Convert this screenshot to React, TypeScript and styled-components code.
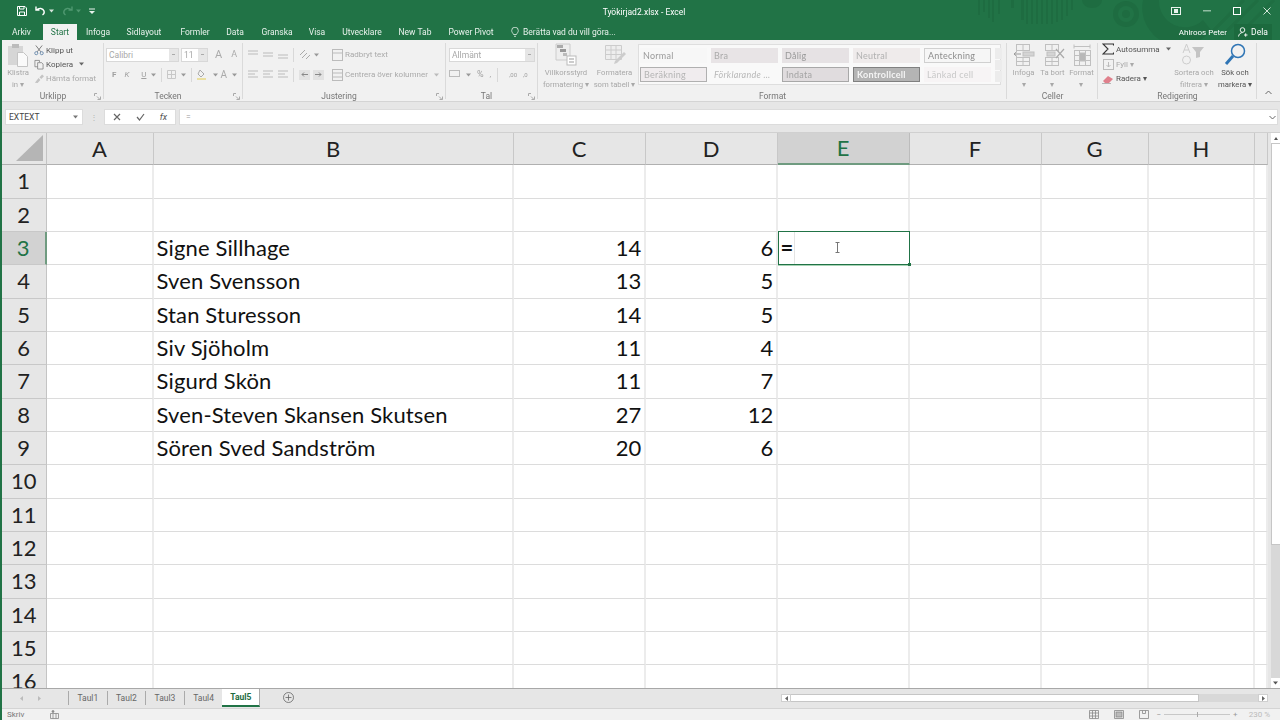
import React from "react"
import styled, { createGlobalStyle } from "styled-components"

const UI_FONT = `Roboto, "Open Sans", sans-serif`
const SHEET_FONT = `Lato, "Open Sans", sans-serif`

const GlobalStyle = createGlobalStyle`
    html, body { margin: 0; padding: 0; overflow: hidden; background: #f1f1f1; }
    * { box-sizing: border-box; }
`

const Window = styled.div`
    width: 1280px;
    height: 720px;
    display: flex;
    flex-direction: column;
    overflow: hidden;
    border-left: 2px solid #217346;
    font-family: ${UI_FONT};
    position: relative;
    filter: blur(0.3px);
`

const TitleBar = styled.div`
    height: 40px;
    margin-left: -2px;
    background: #217346;
    color: #fff;
    position: relative;
    display: flex;
    flex-direction: column;
    flex: none;
`

const Watermark = styled.svg`
    position: absolute;
    right: 0;
    top: 0;
`

const TitleRow = styled.div`
    height: 24px;
    display: grid;
    grid-template-columns: 1fr auto 1fr;
    align-items: center;
    padding: 0 9px 2px 17px;
    position: relative;
`

const QuickAccess = styled.div`
    display: flex;
    align-items: center;
    gap: 8px;
`

const QuickGroup = styled.div`
    display: flex;
    align-items: center;
    gap: 3px;
`

const TitleText = styled.div`
    font-size: 8.5px;
    padding-top: 2px;
`

const WindowControls = styled.div`
    display: flex;
    justify-content: flex-end;
    align-items: center;
    gap: 22px;
`

const TabRow = styled.div`
    height: 16px;
    display: flex;
    align-items: stretch;
    position: relative;
`

const MenuTab = styled.div<{ $w: number; $active?: boolean }>`
    width: ${({ $w }) => $w}px;
    font-size: 8.5px;
    display: flex;
    align-items: center;
    justify-content: center;
    color: ${({ $active }) => ($active ? "#217346" : "#e8f2ec")};
    background: ${({ $active }) => ($active ? "#f1f1f1" : "transparent")};
`

const TellMe = styled.div`
    margin-left: 4px;
    font-size: 8.5px;
    color: #e8f2ec;
    display: flex;
    align-items: center;
    gap: 4px;
`

const UserArea = styled.div`
    margin-left: auto;
    display: flex;
    align-items: center;
    padding-right: 8px;
    font-size: 8px;
`

const ShareButton = styled.div`
    width: 38px;
    height: 16px;
    margin-left: 7px;
    background: #1c6a3e;
    font-size: 8.5px;
    display: flex;
    align-items: center;
    justify-content: center;
    gap: 3px;
`

const Ribbon = styled.div`
    height: 62px;
    flex: none;
    display: flex;
    background: #f1f1f1;
    border-bottom: 1px solid #d4d4d4;
    position: relative;
`

const Group = styled.div<{ $w: number }>`
    width: ${({ $w }) => $w}px;
    flex: none;
    display: flex;
    flex-direction: column;
    position: relative;
    &::after {
        content: "";
        position: absolute;
        right: 0;
        top: 3px;
        bottom: 2px;
        width: 1px;
        background: #dadada;
    }
`

const GroupBody = styled.div<{ $pad?: string; $gap?: number }>`
    height: 46px;
    flex: none;
    display: flex;
    gap: ${({ $gap }) => $gap ?? 4}px;
    padding: ${({ $pad }) => $pad ?? "3px 4px 0"};
`

const GroupLabel = styled.div<{ $shift?: boolean }>`
    height: 15px;
    flex: none;
    font-size: 8.5px;
    color: #777;
    display: flex;
    align-items: center;
    justify-content: center;
    position: relative;
    padding-top: 4px;
    padding-right: ${({ $shift }) => ($shift ? "11px" : "0")};
`

const Launcher = styled.svg`
    position: absolute;
    right: 3px;
    top: 7px;
`

const BigButton = styled.div<{ $w: number; $dark?: boolean }>`
    width: ${({ $w }) => $w}px;
    flex: none;
    display: flex;
    flex-direction: column;
    align-items: center;
    font-size: 7.7px;
    line-height: 11.5px;
    text-align: center;
    white-space: nowrap;
    color: ${({ $dark }) => ($dark ? "#555" : "#a8a8a8")};
    & > svg {
        flex: none;
        margin-bottom: 0;
    }
`

const SmallColumn = styled.div<{ $w?: number }>`
    width: ${({ $w }) => ($w ? `${$w}px` : "auto")};
    flex: none;
    display: flex;
    flex-direction: column;
`

const SmallAction = styled.div<{ $muted?: boolean }>`
    height: 15px;
    display: flex;
    align-items: center;
    gap: 2px;
    font-size: 8px;
    white-space: nowrap;
    color: ${({ $muted }) => ($muted ? "#aaa" : "#555")};
`

const Stack = styled.div<{ $gap?: number }>`
    display: flex;
    flex-direction: column;
    gap: ${({ $gap }) => $gap ?? 5}px;
`

const Line = styled.div<{ $gap?: number }>`
    display: flex;
    align-items: center;
    gap: ${({ $gap }) => $gap ?? 5}px;
    height: 15px;
`

const Combo = styled.div<{ $w: number }>`
    width: ${({ $w }) => $w}px;
    height: 14px;
    background: #fff;
    border: 1px solid #d8d8d8;
    font-size: 8.5px;
    color: #a8a8a8;
    display: flex;
    align-items: center;
    padding-left: 2px;
    position: relative;
    &::after {
        content: "";
        position: absolute;
        right: 0;
        top: 0;
        bottom: 0;
        width: 9px;
        background: #e6e6e6 linear-gradient(#aaa, #aaa) center / 3px 1px no-repeat;
    }
`

const Glyph = styled.span<{ $size?: number; $italic?: boolean; $under?: boolean; $bold?: boolean; $color?: string; $gapLeft?: number }>`
    font-size: ${({ $size }) => $size ?? 8}px;
    font-style: ${({ $italic }) => ($italic ? "italic" : "normal")};
    font-weight: ${({ $bold }) => ($bold ? 700 : 400)};
    text-decoration: ${({ $under }) => ($under ? "underline" : "none")};
    color: ${({ $color }) => $color ?? "#a0a0a0"};
    margin-left: ${({ $gapLeft }) => $gapLeft ?? 0}px;
    line-height: 1;
`

const VSep = styled.div`
    width: 1px;
    height: 14px;
    background: #d8d8d8;
`

const OrientSlot = styled.div`
    width: 28px;
    display: flex;
    align-items: center;
    gap: 3px;
`

const IndentBox = styled.div`
    width: 11px;
    height: 10px;
    background: #e2e2e2;
    display: flex;
    align-items: center;
    justify-content: center;
`

const Gallery = styled.div`
    margin-top: 1px;
    width: 363px;
    height: 41px;
    background: #f9f9f9;
    border: 1px solid #dedede;
    display: grid;
    grid-template-columns: repeat(5, 67px) 7px;
    grid-template-rows: 15px 15px;
    column-gap: 4px;
    row-gap: 4px;
    padding: 3px 1px;
    position: relative;
`

const StyleCell = styled.div<{ $bg: string; $color: string; $border?: string; $italic?: boolean; $bold?: boolean }>`
    background: ${({ $bg }) => $bg};
    color: ${({ $color }) => $color};
    border: ${({ $border }) => ($border ? `1px solid ${$border}` : "none")};
    font-family: ${SHEET_FONT};
    font-size: 9px;
    font-style: ${({ $italic }) => ($italic ? "italic" : "normal")};
    font-weight: ${({ $bold }) => ($bold ? 700 : 400)};
    letter-spacing: 0.25px;
    display: flex;
    align-items: center;
    padding: 0 0 1px 3px;
    white-space: nowrap;
    overflow: hidden;
`

const GalleryScroll = styled.div`
    grid-column: 6;
    grid-row: 1 / span 2;
    display: grid;
    grid-template-rows: 1fr 1fr 1fr;
    gap: 1px;
    & > div { background: #ececec; }
`

const CollapseArrow = styled.svg`
    position: absolute;
    right: 8px;
    bottom: 6px;
`

const FormulaBar = styled.div`
    height: 31px;
    flex: none;
    background: #e6e6e6;
    display: flex;
    align-items: center;
    padding: 0 2px 0 3px;
    border-bottom: 1px solid #d0d0d0;
`

const NameBox = styled.div`
    width: 78px;
    height: 16px;
    background: #fff;
    border: 1px solid #dcdcdc;
    font-size: 8.5px;
    color: #444;
    display: flex;
    align-items: center;
    justify-content: space-between;
    padding: 0 4px 0 3px;
`

const GripDots = styled.div`
    width: 21px;
    text-align: center;
    color: #b5b5b5;
    font-size: 8px;
`

const FxBox = styled.div`
    width: 72px;
    height: 16px;
    background: #fff;
    border: 1px solid #dcdcdc;
    display: flex;
    align-items: center;
    justify-content: space-between;
    padding: 0 8px;
`

const FormulaInput = styled.div`
    flex: 1;
    height: 16px;
    margin-left: 3px;
    background: #fff;
    border: 1px solid #dcdcdc;
    font-size: 8.5px;
    color: #999;
    display: flex;
    align-items: center;
    padding: 0 1px 0 6px;
    justify-content: space-between;
`

const SheetArea = styled.div`
    height: 556px;
    flex: none;
    display: flex;
    background: #fff;
`

const Grid = styled.div`
    flex: 1;
    overflow: hidden;
    display: grid;
    grid-template-columns: 44.5px 107px 360px 132px 132px 132px 132px 107px 106px 13.5px;
    grid-template-rows: 32.3px repeat(16, 33.33px);
    font-family: ${SHEET_FONT};
    font-size: 22px;
    line-height: 1;
    color: #111;
    position: relative;
    border-bottom: 1px solid #a8a8a8;
    height: 556px;
`

const Corner = styled.div`
    background: #e6e6e6;
    border-right: 1px solid #c4c4c4;
    border-bottom: 1px solid #b0b0b0;
    position: relative;
    &::after {
        content: "";
        position: absolute;
        right: 3px;
        bottom: 3px;
        border-style: solid;
        border-width: 0 0 26px 27px;
        border-color: transparent transparent #b5b5b5 transparent;
    }
`

const ColHead = styled.div<{ $active?: boolean }>`
    background: ${({ $active }) => ($active ? "#d2d2d2" : "#e6e6e6")};
    color: ${({ $active }) => ($active ? "#217346" : "#222")};
    border-right: 1px solid ${({ $active }) => ($active ? "#bcbcbc" : "#c8c8c8")};
    border-bottom: ${({ $active }) => ($active ? "2px solid #6f9b80" : "1px solid #b0b0b0")};
    display: flex;
    align-items: center;
    justify-content: center;
`

const RowHead = styled.div<{ $active?: boolean }>`
    background: ${({ $active }) => ($active ? "#d2d2d2" : "#e6e6e6")};
    color: ${({ $active }) => ($active ? "#217346" : "#222")};
    border-right: ${({ $active }) => ($active ? "2px solid #6f9b80" : "1px solid #c4c4c4")};
    border-bottom: 1px solid #c8c8c8;
    display: flex;
    align-items: center;
    justify-content: center;
`

const Cell = styled.div<{ $num?: boolean }>`
    border-right: 2px solid #ececec;
    border-bottom: 1px solid #dcdcdc;
    display: flex;
    align-items: center;
    justify-content: ${({ $num }) => ($num ? "flex-end" : "flex-start")};
    padding: 0 ${({ $num }) => ($num ? "2px" : "0")} 0 ${({ $num }) => ($num ? "0" : "3px")};
    white-space: nowrap;
    letter-spacing: 0.14px;
`

const SelectedCell = styled.div`
    border: 1px solid #217346;
    box-shadow: 0 1px 0 #a7d3b5;
    display: flex;
    align-items: stretch;
    position: relative;
    margin-top: -1px;
    &::after {
        content: "";
        position: absolute;
        right: -2px;
        bottom: -2px;
        width: 3px;
        height: 3px;
        background: #217346;
    }
`

const EditText = styled.div`
    width: 16px;
    padding-left: 2px;
    font-weight: 700;
    display: flex;
    align-items: center;
    border-right: 1px solid #e4e4e4;
`

const EditCursor = styled.svg`
    position: absolute;
    left: 56px;
    top: 10px;
`

const VScroll = styled.div`
    width: 12px;
    flex: none;
    background: #e6e6e6;
    padding-left: 3px;
    display: flex;
    flex-direction: column;
    height: 556px;
    border-bottom: 1px solid #a8a8a8;
`

const ScrollThumb = styled.div`
    height: 402px;
    flex: none;
    background: #fff;
    border: 1px solid #c6c6c6;
    border-right: none;
`

const ScrollRest = styled.div`
    flex: 1;
    background: #d8d8d8;
`

const ScrollButton = styled.div`
    height: 10px;
    flex: none;
    background: #fff;
    display: flex;
    align-items: center;
    justify-content: center;
`

const UpCaret = styled.div`
    width: 0;
    height: 0;
    border-style: solid;
    border-width: 0 2.5px 3px 2.5px;
    border-color: transparent transparent #555 transparent;
`

const TabStrip = styled.div`
    height: 19px;
    flex: none;
    background: #e6e6e6;
    display: flex;
    align-items: stretch;
    font-size: 8.5px;
`

const TabNav = styled.div`
    width: 66px;
    display: flex;
    align-items: center;
    gap: 15px;
    padding-left: 18px;
    color: #bbb;
    flex: none;
`

const SheetTab = styled.div<{ $active?: boolean }>`
    width: ${({ $active }) => ($active ? 38 : 38.6)}px;
    margin: ${({ $active }) => ($active ? "0 0 1px" : "2px 0 3px")};
    display: flex;
    align-items: center;
    justify-content: center;
    color: ${({ $active }) => ($active ? "#1e6b40" : "#666")};
    font-weight: ${({ $active }) => ($active ? 700 : 400)};
    background: ${({ $active }) => ($active ? "#fff" : "transparent")};
    border-left: ${({ $active }) => ($active ? "none" : "1px solid #aaa")};
    border-bottom: ${({ $active }) => ($active ? "2px solid #217346" : "none")};
    border-right: ${({ $active }) => ($active ? "1px solid #aaa" : "none")};
`

const AddSheet = styled.svg`
    margin: 3px 0 0 23px;
    flex: none;
`

const HScrollTrack = styled.div`
    width: 487px;
    margin: 5px 12px 6px auto;
    display: flex;
    background: #d8d8d8;
    align-items: stretch;
`

const ArrowBox = styled.div`
    width: 10px;
    background: #fff;
    border: 1px solid #cfcfcf;
    display: flex;
    align-items: center;
    justify-content: center;
`

const HThumb = styled.div`
    width: 408px;
    background: #fff;
    border: 1px solid #c6c6c6;
    border-left: none;
`

const HRest = styled.div`
    flex: 1;
`

const StatusBar = styled.div`
    height: 12px;
    flex: none;
    background: #f1f1f1;
    border-top: 1px solid #d4d4d4;
    display: flex;
    align-items: center;
    font-size: 8px;
    color: #777;
    padding-left: 5px;
`

const MacroIcon = styled.svg`
    margin-left: 26px;
`

const StatusRight = styled.div`
    margin-left: auto;
    display: flex;
    align-items: center;
    gap: 15px;
    padding-right: 10px;
`

const ZoomSlider = styled.div`
    width: 66px;
    height: 1px;
    background: #c8c8c8;
    position: relative;
    &::after {
        content: "";
        position: absolute;
        left: 33px;
        top: -2px;
        width: 1px;
        height: 5px;
        background: #aaa;
    }
`

const ZoomGroup = styled.div`
    display: flex;
    align-items: center;
    gap: 3px;
    margin-left: -7px;
    color: #999;
`

const ZoomValue = styled.span`
    margin-left: 8px;
    color: #bbb;
`

const Caret = ({ color = "#999" }: { color?: string }) => (
    <svg width="5" height="4" viewBox="0 0 5 4"><path d="M0 .5h5L2.5 3.5z" fill={color} /></svg>
)

const LauncherIcon = () => (
    <Launcher width="7" height="7" viewBox="0 0 7 7">
        <path d="M.5 3V.5H3M6 6.5L3 3.5M6.5 3.5v3h-3" stroke="#aaa" strokeWidth="1" fill="none" />
    </Launcher>
)

const CellIcon = ({ kind }: { kind: "insert" | "delete" | "format" }) => (
    <svg width="24" height="24" viewBox="0 0 24 24" fill="none" stroke="#c0c0c0" strokeWidth="1">
        {kind === "format" ? (
            <>
                <path d="M4 3.5h16M4 1.5v4M20 1.5v4" />
                <rect x="4.5" y="7.5" width="16" height="15" />
                <path d="M4.5 12.5h16M4.5 17.5h16M9.5 7.5v15M15.5 7.5v15" />
                <rect x="9.5" y="10" width="6" height="8" fill="#b8b8b8" />
            </>
        ) : (
            <>
                <rect x="4.5" y="1.5" width="13" height="6" />
                <path d="M11 1.5v6" />
                <rect x="4.5" y="14.5" width="13" height="8" />
                <path d="M4.5 18.5h13M11 14.5v8" />
                {kind === "insert" ? (
                    <>
                        <rect x="11" y="9" width="11" height="4" fill="#d4d4d4" />
                        <path d="M9 11H2M5 8.5L2 11l3 2.5" stroke="#999" />
                    </>
                ) : (
                    <>
                        <rect x="6" y="9" width="8" height="4" fill="#d4d4d4" />
                        <path d="M15 6l8 9M23 6l-8 9" stroke="#aaa" strokeWidth="1.2" />
                    </>
                )}
            </>
        )}
    </svg>
)

const COL_LABELS = ["A", "B", "C", "D", "E", "F", "G", "H", ""]
const ROWS: Record<number, [string, number, number]> = {
    3: ["Signe Sillhage", 14, 6],
    4: ["Sven Svensson", 13, 5],
    5: ["Stan Sturesson", 14, 5],
    6: ["Siv Sjöholm", 11, 4],
    7: ["Sigurd Skön", 11, 7],
    8: ["Sven-Steven Skansen Skutsen", 27, 12],
    9: ["Sören Sved Sandström", 20, 6],
}
const ROW_NUMBERS = Array.from({ length: 16 }, (_, i) => i + 1)

const MENU: [string, number, boolean?][] = [
    ["Arkiv", 43],
    ["Start", 34, true],
    ["Infoga", 42],
    ["Sidlayout", 50],
    ["Formler", 52],
    ["Data", 28],
    ["Granska", 56],
    ["Visa", 24],
    ["Utvecklare", 66],
    ["New Tab", 40],
    ["Power Pivot", 72],
]

const App: React.FC = () => (
    <Window>
        <GlobalStyle />
        <TitleBar>
            <Watermark width="310" height="40" viewBox="970 0 310 40">
                <g fill="#1e6c41">
                    <rect x="978" y="0" width="2" height="15" />
                    <rect x="983" y="0" width="2" height="12" />
                    <rect x="988" y="0" width="2" height="18" />
                    <rect x="992" y="0" width="2" height="22" />
                    <rect x="998" y="0" width="2" height="14" />
                    <rect x="1011" y="0" width="3" height="8" />
                    <rect x="1021" y="0" width="3" height="20" />
                    <rect x="1026" y="0" width="2" height="24" />
                    <rect x="1031" y="0" width="2" height="24" />
                    <rect x="1036" y="0" width="2" height="24" />
                    <rect x="1041" y="0" width="2" height="24" />
                    <rect x="1046" y="0" width="2" height="24" />
                    <rect x="1051" y="0" width="2" height="24" />
                    <rect x="1056" y="0" width="2" height="22" />
                    <rect x="1061" y="0" width="2" height="20" />
                    <rect x="1066" y="0" width="2" height="16" />
                    <rect x="1071" y="0" width="2" height="10" />
                    <path d="M1082 0h20a10 8 0 0 1-20 0z" />
                </g>
                <circle cx="1126" cy="14" r="13" fill="#1e6c41" />
                <circle cx="1126" cy="14" r="8" fill="#217346" />
                <circle cx="1126" cy="14" r="4" fill="#1e6c41" />
                <path d="M1143 0a38 38 0 0 0 68 30l-8-10a26 26 0 0 1-44-20z" fill="#1e6c41" />
                <path d="M1212 32l32-32M1222 36l36-36M1236 38l38-38" stroke="#1f6e42" strokeWidth="3" />
            </Watermark>
            <TitleRow>
                <QuickAccess>
                    <svg width="10" height="10" viewBox="0 0 10 10" fill="none" stroke="#fff" strokeWidth="1">
                        <path d="M.5.5H8L9.500 2v7.500H.5z" />
                        <path d="M2.500.5V3H7V.5M2.500 9.500V6h5v3.500" />
                    </svg>
                    <QuickGroup>
                        <svg width="11" height="10" viewBox="0 0 11 10" fill="none" stroke="#fff" strokeWidth="1.4">
                            <path d="M1 .5V4h3.500M1.500 4C4 1.500 8 2 9 5c.5 1.500 0 3-1.500 4" />
                        </svg>
                        <Caret color="#d7e6dd" />
                    </QuickGroup>
                    <QuickGroup>
                        <svg width="11" height="10" viewBox="0 0 11 10" fill="none" stroke="#4f9870" strokeWidth="1.4">
                            <path d="M10 .5V4H6.500M9.500 4C7 1.500 3 2 2 5c-.5 1.500 0 3 1.500 4" />
                        </svg>
                        <Caret color="#4f9870" />
                    </QuickGroup>
                    <svg width="6" height="6" viewBox="0 0 6 6"><path d="M0 3h6L3 6z" fill="#e8f2ec" /><path d="M0 1h6" stroke="#e8f2ec" /></svg>
                </QuickAccess>
                <TitleText>Työkirjad2.xlsx - Excel</TitleText>
                <WindowControls>
                    <svg width="10" height="8" viewBox="0 0 10 8"><rect x=".5" y=".5" width="9" height="7" fill="none" stroke="#e8f2ec" /><rect x="3" y="2" width="4" height="4" fill="#e8f2ec" /></svg>
                    <svg width="8" height="2" viewBox="0 0 8 2"><rect width="8" height="1.5" fill="#8fbca2" /></svg>
                    <svg width="8" height="8" viewBox="0 0 8 8"><rect x=".5" y=".5" width="7" height="7" fill="none" stroke="#fff" /></svg>
                    <svg width="8" height="8" viewBox="0 0 8 8"><path d="M.5.5l7 7M7.5.5l-7 7" stroke="#cfe3d6" /></svg>
                </WindowControls>
            </TitleRow>
            <TabRow>
                {MENU.map(([label, w, active]) => (
                    <MenuTab key={label} $w={w} $active={active}>{label}</MenuTab>
                ))}
                <TellMe>
                    <svg width="8" height="10" viewBox="0 0 8 10" fill="none" stroke="#e8f2ec" strokeWidth=".8">
                        <path d="M2.5 7.5C2 6 .7 5.5.7 3.5a3.3 3.3 0 0 1 6.600 0C7.300 5.500 6 6 5.500 7.500zM3 9.300h2" />
                    </svg>
                    Berätta vad du vill göra...
                </TellMe>
                <UserArea>
                    Ahlroos Peter
                    <ShareButton>
                        <svg width="10" height="10" viewBox="0 0 10 10" fill="none" stroke="#fff" strokeWidth=".9">
                            <circle cx="4.5" cy="3" r="2.3" />
                            <path d="M.5 9.5C1 7 2.500 5.600 4.500 5.600M6 8h3.500M7.700 6.300v3.400" />
                        </svg>
                        Dela
                    </ShareButton>
                </UserArea>
            </TabRow>
        </TitleBar>

        <Ribbon>
            <Group $w={102}>
                <GroupBody $pad="3px 2px 0 3px" $gap={3}>
                    <BigButton $w={26}>
                        <svg width="22" height="24" viewBox="0 0 22 24">
                            <rect x="1" y="3" width="15" height="19" fill="#d6d6d6" />
                            <rect x="5" y="1" width="7" height="4" fill="#bcbcbc" />
                            <path d="M10.5 9.5h6l4 4v10h-10z" fill="#fafafa" stroke="#c4c4c4" />
                        </svg>
                        Klistra
                        <br />
                        in ▾
                    </BigButton>
                    <SmallColumn>
                        <SmallAction>
                            <svg width="10" height="12" viewBox="0 0 11 12" fill="none" stroke="#666" strokeWidth=".9">
                                <path d="M2 1l5.5 7M9 1L3.5 8" />
                                <circle cx="2.5" cy="9.5" r="1.7" stroke="#5b7fa6" />
                                <circle cx="8.5" cy="9.500" r="1.700" stroke="#5b7fa6" />
                            </svg>
                            Klipp ut
                        </SmallAction>
                        <SmallAction>
                            <svg width="10" height="11" viewBox="0 0 11 11" fill="none" stroke="#777" strokeWidth=".8">
                                <path d="M1 1h5v2M1 1v7h3" />
                                <path d="M4 3.5h4.5L10 5v5.5H4z" />
                            </svg>
                            Kopiera&nbsp;&nbsp;<Caret color="#666" />
                        </SmallAction>
                        <SmallAction $muted>
                            <svg width="10" height="10" viewBox="0 0 11 10">
                                <path d="M1 9l4-5 2 2-3 3.5zM6 3l3-3 2 2-3 3z" fill="#c4c4c4" />
                            </svg>
                            Hämta format
                        </SmallAction>
                    </SmallColumn>
                </GroupBody>
                <GroupLabel>Urklipp<LauncherIcon /></GroupLabel>
            </Group>

            <Group $w={139}>
                <GroupBody $pad="7px 2px 0 2px">
                    <Stack $gap={5}>
                        <Line $gap={2}>
                            <Combo $w={73}>Calibri</Combo>
                            <Combo $w={27}>11</Combo>
                            <Glyph $size={11} $color="#aaa" $gapLeft={5}>A</Glyph>
                            <Glyph $size={9} $color="#aaa" $gapLeft={7}>A</Glyph>
                        </Line>
                        <Line $gap={5}>
                            <Glyph $bold $gapLeft={6}>F</Glyph>
                            <Glyph $italic $gapLeft={3}>K</Glyph>
                            <Glyph $under $gapLeft={7}>U</Glyph>
                            <Caret />
                            <VSep />
                            <svg width="9" height="9" viewBox="0 0 9 9"><path d="M.5.5h8v8h-8zM.5 4.5h8M4.5.5v8" fill="none" stroke="#c8c8c8" /></svg>
                            <Caret />
                            <VSep />
                            <svg width="11" height="11" viewBox="0 0 11 11"><path d="M3 1l4 4-3 3-3-3z" fill="none" stroke="#aaa" /><rect y="9" width="9" height="2" fill="#eadfa0" /></svg>
                            <Caret />
                            <Glyph $size={10} $color="#aaa" $gapLeft={-3}>A</Glyph>
                            <Caret />
                        </Line>
                    </Stack>
                </GroupBody>
                <GroupLabel $shift>Tecken<LauncherIcon /></GroupLabel>
            </Group>

            <Group $w={203}>
                <GroupBody $pad="7px 2px 0 5px">
                    <Stack $gap={5}>
                        <Line $gap={5}>
                            {[0, 1, 2].map((i) => (
                                <svg key={i} width="10" height="9" viewBox="0 0 10 9" stroke="#bbb"><path d={`M0 ${1 + i * 2}h10M0 ${4 + i * 2}h10`} /></svg>
                            ))}
                            <VSep />
                            <OrientSlot>
                                <svg width="12" height="11" viewBox="0 0 12 11" fill="none" stroke="#aaa"><path d="M1 6l5-5M3 9l5-5M7 10l4-4" /></svg>
                                <Caret />
                            </OrientSlot>
                            <SmallAction $muted>
                                <svg width="11" height="12" viewBox="0 0 11 12" fill="none" stroke="#bbb"><rect x=".5" y=".5" width="10" height="11" /><path d="M.5 4h10" /></svg>
                                Radbryt text
                            </SmallAction>
                        </Line>
                        <Line $gap={5}>
                            {[0, 1, 2].map((i) => (
                                <svg key={i} width="10" height="9" viewBox="0 0 10 9" stroke="#bbb"><path d="M0 1h10M0 4h7M0 7h10" /></svg>
                            ))}
                            <VSep />
                            <OrientSlot>
                                <IndentBox><svg width="7" height="5" viewBox="0 0 7 5" stroke="#888"><path d="M7 2.5H1M3 .5L1 2.500l2 2" fill="none" /></svg></IndentBox>
                                <IndentBox><svg width="7" height="5" viewBox="0 0 7 5" stroke="#888"><path d="M0 2.5h6M4 .5l2 2-2 2" fill="none" /></svg></IndentBox>
                            </OrientSlot>
                            <SmallAction $muted>
                                <svg width="11" height="12" viewBox="0 0 11 12" fill="none" stroke="#bbb"><rect x=".5" y=".5" width="10" height="11" /><path d="M.5 4h10M.5 8h10" /></svg>
                                Centrera över kolumner&nbsp;&nbsp;<Caret color="#bbb" />
                            </SmallAction>
                        </Line>
                    </Stack>
                </GroupBody>
                <GroupLabel $shift>Justering<LauncherIcon /></GroupLabel>
            </Group>

            <Group $w={92}>
                <GroupBody $pad="7px 2px 0 3px">
                    <Stack $gap={5}>
                        <Line><Combo $w={86}>Allmänt</Combo></Line>
                        <Line $gap={6}>
                            <svg width="11" height="10" viewBox="0 0 11 10" fill="none" stroke="#bbb"><rect x=".5" y=".5" width="10" height="6" /></svg>
                            <Caret />
                            <Glyph $size={9}>%</Glyph>
                            <Glyph>,</Glyph>
                            <VSep />
                            <Glyph $size={6} $gapLeft={5}>,00</Glyph>
                            <Glyph $size={6}>,0</Glyph>
                        </Line>
                    </Stack>
                </GroupBody>
                <GroupLabel $shift>Tal<LauncherIcon /></GroupLabel>
            </Group>

            <Group $w={469}>
                <GroupBody $pad="3px 0 0 3px" $gap={1}>
                    <BigButton $w={50}>
                        <svg width="24" height="24" viewBox="0 0 24 24">
                            <path d="M2 1h14v16H2z" fill="#eee" stroke="#ccc" />
                            <rect x="3" y="2" width="6" height="3" fill="#aaa" />
                            <rect x="6" y="6" width="6" height="3" fill="#999" />
                            <rect x="9" y="10" width="4" height="3" fill="#bbb" />
                            <rect x="13" y="13" width="9" height="9" fill="#fff" stroke="#bbb" />
                            <path d="M15 16h5M15 19h5" stroke="#999" />
                        </svg>
                        Villkorsstyrd
                        <br />
                        formatering ▾
                    </BigButton>
                    <BigButton $w={45}>
                        <svg width="24" height="24" viewBox="0 0 24 24">
                            <path d="M2.5 2.5h16v14h-16zM2.5 7h16M2.5 11.5h16M8 2.5v14M13 2.5v14" fill="#eee" stroke="#ccc" />
                            <path d="M21 9l2 2-9 9-3 1 1-3z" fill="#ccc" />
                        </svg>
                        Formatera
                        <br />
                        som tabell ▾
                    </BigButton>
                    <Gallery>
                        <StyleCell $bg="#f7f7f7" $color="#9a9a9a">Normal</StyleCell>
                        <StyleCell $bg="#e8e4e6" $color="#aaa">Bra</StyleCell>
                        <StyleCell $bg="#e6e2e4" $color="#999">Dålig</StyleCell>
                        <StyleCell $bg="#efebeb" $color="#b0b0b0">Neutral</StyleCell>
                        <StyleCell $bg="#f6f6f6" $color="#8c8c8c" $border="#d0d0d0">Anteckning</StyleCell>
                        <GalleryScroll><div /><div /><div /></GalleryScroll>
                        <StyleCell $bg="#f0ecee" $color="#b4b4b4" $border="#b0b0b0">Beräkning</StyleCell>
                        <StyleCell $bg="#f9f9f9" $color="#b8b8b8" $italic>Förklarande ...</StyleCell>
                        <StyleCell $bg="#e0dcde" $color="#a4a4a4" $border="#a8a8a8">Indata</StyleCell>
                        <StyleCell $bg="#b4b4b4" $color="#f4f4f4" $border="#808080" $bold>Kontrollcell</StyleCell>
                        <StyleCell $bg="#f7f4f5" $color="#c8c8c8">Länkad cell</StyleCell>
                    </Gallery>
                </GroupBody>
                <GroupLabel>Format</GroupLabel>
            </Group>

            <Group $w={91}>
                <GroupBody $pad="3px 2px 0 4px">
                    {(["insert", "delete", "format"] as const).map((kind, i) => (
                        <BigButton key={kind} $w={25}>
                            <CellIcon kind={kind} />
                            {["Infoga", "Ta bort", "Format"][i]}
                            <br />
                            ▾
                        </BigButton>
                    ))}
                </GroupBody>
                <GroupLabel>Celler</GroupLabel>
            </Group>

            <Group $w={159}>
                <GroupBody $pad="2px 2px 0 4px">
                    <SmallColumn $w={70}>
                        <SmallAction>
                            <svg width="12" height="12" viewBox="0 0 12 12" fill="none" stroke="#333" strokeWidth="1.1">
                                <path d="M11.5 2.5V1H1l5 5-5 5h10.500V9.500" />
                            </svg>
                            Autosumma&nbsp;&nbsp;<Caret color="#666" />
                        </SmallAction>
                        <SmallAction $muted>
                            <svg width="12" height="11" viewBox="0 0 12 11" fill="none" stroke="#bbb"><rect x="1.500" y=".5" width="10" height="10" /><path d="M6.500 3v5M4.500 6l2 2 2-2" /></svg>
                            Fyll ▾
                        </SmallAction>
                        <SmallAction>
                            <svg width="12" height="10" viewBox="0 0 12 10"><path d="M1 7l5-5 5 3-4 4H3z" fill="#e0808c" /><path d="M0 9.5h9" stroke="#999" strokeWidth=".7" /></svg>
                            Radera ▾
                        </SmallAction>
                    </SmallColumn>
                    <BigButton $w={36}>
                        <svg width="24" height="25" viewBox="0 0 24 25">
                            <path d="M10 5h12l-4 5v5l-4 1v-6z" fill="#c4c4c4" />
                            <path d="M1 11l3.500-9L8 11M2.200 8h4.600" fill="none" stroke="#ccc" />
                            <circle cx="4.5" cy="18" r="4" fill="none" stroke="#ccc" />
                        </svg>
                        Sortera och
                        <br />
                        filtrera ▾
                    </BigButton>
                    <BigButton $w={38} $dark>
                        <svg width="24" height="25" viewBox="0 0 24 25" fill="none">
                            <circle cx="15" cy="9" r="6.5" stroke="#2f75b5" strokeWidth="1.5" />
                            <path d="M10 14l-7 8" stroke="#2f75b5" strokeWidth="3" />
                        </svg>
                        Sök och
                        <br />
                        markera ▾
                    </BigButton>
                </GroupBody>
                <GroupLabel>Redigering</GroupLabel>
            </Group>

            <CollapseArrow width="7" height="5" viewBox="0 0 7 5">
                <path d="M.5 4L3.5 1l3 3" stroke="#666" fill="none" />
            </CollapseArrow>
        </Ribbon>

        <FormulaBar>
            <NameBox>EXTEXT <Caret color="#777" /></NameBox>
            <GripDots>⋮</GripDots>
            <FxBox>
                <svg width="8" height="8" viewBox="0 0 8 8"><path d="M1 1l6 6M7 1L1 7" stroke="#666" strokeWidth="1.2" /></svg>
                <svg width="9" height="8" viewBox="0 0 9 8"><path d="M1 4l2.5 3L8 1" stroke="#666" strokeWidth="1.2" fill="none" /></svg>
                <Glyph $size={9} $italic $color="#555">fx</Glyph>
            </FxBox>
            <FormulaInput>
                =
                <svg width="7" height="5" viewBox="0 0 7 5"><path d="M.5 1L3.500 4l3-3" stroke="#666" fill="none" /></svg>
            </FormulaInput>
        </FormulaBar>

        <SheetArea>
            <Grid>
                <Corner />
                {COL_LABELS.map((label, i) => (
                    <ColHead key={i} $active={label === "E"}>{label}</ColHead>
                ))}
                {ROW_NUMBERS.map((row) => {
                    const data = ROWS[row]
                    return (
                        <React.Fragment key={row}>
                            <RowHead $active={row === 3}>{row}</RowHead>
                            <Cell />
                            <Cell>{data?.[0]}</Cell>
                            <Cell $num>{data?.[1]}</Cell>
                            <Cell $num>{data?.[2]}</Cell>
                            {row === 3 ? (
                                <SelectedCell>
                                    <EditText>=</EditText>
                                    <EditCursor width="5" height="11" viewBox="0 0 5 11">
                                        <path d="M.5.5h4M2.5.5v10M.5 10.500h4" stroke="#777" />
                                    </EditCursor>
                                </SelectedCell>
                            ) : (
                                <Cell />
                            )}
                            <Cell />
                            <Cell />
                            <Cell />
                            <Cell />
                        </React.Fragment>
                    )
                })}
            </Grid>
            <VScroll>
                <ScrollButton><UpCaret /></ScrollButton>
                <ScrollThumb />
                <ScrollRest />
                <ScrollButton><Caret color="#555" /></ScrollButton>
            </VScroll>
        </SheetArea>

        <TabStrip>
            <TabNav>
                <svg width="3" height="5" viewBox="0 0 3 5"><path d="M3 0v5L0 2.5z" fill="#bbb" /></svg>
                <svg width="3" height="5" viewBox="0 0 3 5"><path d="M0 0v5l3-2.5z" fill="#bbb" /></svg>
            </TabNav>
            {["Taul1", "Taul2", "Taul3", "Taul4"].map((name) => (
                <SheetTab key={name}>{name}</SheetTab>
            ))}
            <SheetTab $active>Taul5</SheetTab>
            <AddSheet width="11" height="11" viewBox="0 0 11 11" fill="none" stroke="#666" strokeWidth=".8">
                <circle cx="5.5" cy="5.5" r="5" />
                <path d="M5.5 2.5v6M2.5 5.5h6" />
            </AddSheet>
            <HScrollTrack>
                <ArrowBox><svg width="3" height="5" viewBox="0 0 3 5"><path d="M3 0v5L0 2.5z" fill="#666" /></svg></ArrowBox>
                <HThumb />
                <HRest />
                <ArrowBox><svg width="3" height="5" viewBox="0 0 3 5"><path d="M0 0v5l3-2.5z" fill="#666" /></svg></ArrowBox>
            </HScrollTrack>
        </TabStrip>

        <StatusBar>
            Skriv
            <MacroIcon width="9" height="9" viewBox="0 0 9 9" fill="none" stroke="#888" strokeWidth=".8"><path d="M.5 3.5h8v5h-8zM3 3.5v5M6 3.5v5" /><circle cx="3" cy="1.5" r="1" fill="#888" /></MacroIcon>
            <StatusRight>
                <svg width="10" height="9" viewBox="0 0 10 9" fill="none" stroke="#888" strokeWidth=".8"><path d="M.5.5h9v8h-9zM.5 3h9M.5 6h9M3.5.5v8M6.5.5v8" /></svg>
                <svg width="10" height="9" viewBox="0 0 10 9" fill="none" stroke="#888" strokeWidth=".8"><path d="M.5.5h9v8h-9z" /><rect x="2" y="2" width="6" height="5" fill="#bbb" /></svg>
                <svg width="10" height="9" viewBox="0 0 10 9" fill="none" stroke="#888" strokeWidth=".8"><path d="M.5.5h9v8h-9zM3.5.5v3h3v-3" /></svg>
                <ZoomGroup>
                    −<ZoomSlider />+
                    <ZoomValue>230 %</ZoomValue>
                </ZoomGroup>
            </StatusRight>
        </StatusBar>
    </Window>
)

export default App
